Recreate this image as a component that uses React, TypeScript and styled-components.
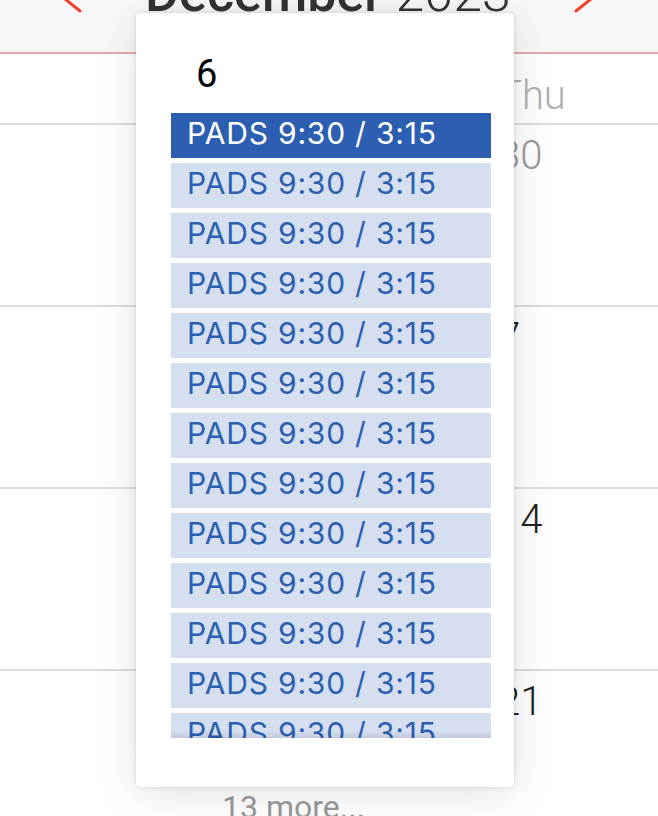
import React from 'react';
import styled, { createGlobalStyle } from 'styled-components';

type Day = { label: string; muted?: boolean; more?: number };

// only Wed and Thu are in view; the previous column sits off the left edge
const weekdays = ['Wed', 'Thu'];

const weeks: Day[][] = [
  [{ label: '29', muted: true }, { label: '30', muted: true }],
  [{ label: '6' }, { label: '7' }],
  [{ label: '13' }, { label: '14' }],
  [{ label: '20', more: 13 }, { label: '21' }],
];

const events = Array.from({ length: 16 }, (_, i) => ({
  id: i,
  title: 'PADS 9:30 / 3:15',
}));

const GlobalStyle = createGlobalStyle`
  html, body {
    margin: 0;
    padding: 0;
    overflow: hidden;
    background: #fff;
  }
  body {
    font-family: Roboto, 'Liberation Sans', sans-serif;
  }
`;

const Chevron: React.FC<{ dir: 'left' | 'right' }> = ({ dir }) => (
  <ChevronSvg viewBox="0 0 28 36" width={28} height={36}>
    <path
      d={dir === 'left' ? 'M24 2 L4 18 L24 34' : 'M4 2 L24 18 L4 34'}
      fill="none"
      stroke="#f2412f"
      strokeWidth={3}
      strokeLinecap="round"
      strokeLinejoin="round"
    />
  </ChevronSvg>
);

export default function App() {
  return (
    <>
      <GlobalStyle />
      <Page>
        <Header>
          <Chevron dir="left" />
          <Title>
            <strong>December</strong> <span>2023</span>
          </Title>
          <Chevron dir="right" />
        </Header>

        <WeekdayRow>
          <EdgeCell />
          {weekdays.map((w) => (
            <WeekdayCell key={w}>{w}</WeekdayCell>
          ))}
        </WeekdayRow>

        {weeks.map((week, wi) => (
          <WeekRow key={wi}>
            <EdgeCell />
            {week.map((day) => (
              <DayCell key={day.label}>
                <DayNumber $muted={day.muted}>{day.label}</DayNumber>
                {day.more ? <MoreLink>{day.more} more...</MoreLink> : null}
              </DayCell>
            ))}
          </WeekRow>
        ))}

        <Popover>
          <PopoverDate>6</PopoverDate>
          <EventList>
            {events.map((ev) => (
              <EventItem key={ev.id} $active={ev.id === 0}>
                {ev.title}
              </EventItem>
            ))}
          </EventList>
        </Popover>
      </Page>
    </>
  );
}

/* page is scrolled down a bit, header partly out of view */
const Page = styled.div`
  position: relative;
  margin-top: -60px;
`;

const Header = styled.header`
  box-sizing: border-box;
  height: 114px;
  display: grid;
  grid-template-columns: auto 1fr auto;
  align-items: end;
  padding: 0 58px 28px 56px;
  background: #f8f8f8;
  border-bottom: 2px solid #e6aaa6;
`;

const ChevronSvg = styled.svg`
  display: block;
  margin-bottom: 11px;
`;

const Title = styled.h1`
  margin: 0;
  text-align: center;
  font-size: 52px;
  line-height: 60px;
  color: #333;
  font-weight: 400;

  strong {
    font-weight: 500;
  }
  span {
    font-weight: 300;
  }
`;

const Grid = styled.div`
  display: grid;
  grid-template-columns: 214px repeat(2, 276px);
  box-sizing: border-box;
  border-bottom: 2px solid #dcdcdc;
`;

const EdgeCell = styled.div``;

const WeekdayRow = styled(Grid)`
  height: 71px;
`;

const WeekdayCell = styled.div`
  padding: 18px 8px 0;
  font-size: 40px;
  line-height: 48px;
  font-weight: 300;
  color: #b0b0b0;
`;

const WeekRow = styled(Grid)`
  height: 182px;
`;

const DayCell = styled.div`
  padding: 7px 8px;
  display: flex;
  flex-direction: column;
`;

const DayNumber = styled.div<{ $muted?: boolean }>`
  font-size: 40px;
  line-height: 48px;
  font-weight: 300;
  color: ${(p) => (p.$muted ? '#999' : '#222')};
`;

const MoreLink = styled.div`
  margin-top: 61px;
  font-size: 32px;
  line-height: 40px;
  color: #999;
`;

const Popover = styled.div`
  position: absolute;
  top: 73px;
  left: 136px;
  width: 378px;
  height: 774px;
  box-sizing: border-box;
  padding: 38px 23px 49px 35px;
  display: flex;
  flex-direction: column;
  background: #fff;
  border-radius: 5px;
  box-shadow: 0 0 5px rgba(0, 0, 0, 0.12), 0 6px 44px rgba(0, 0, 0, 0.12);
`;

const PopoverDate = styled.div`
  padding-left: 25px;
  margin-bottom: 16px;
  font-size: 38px;
  line-height: 46px;
  color: #000;
`;

const EventList = styled.div`
  position: relative;
  flex: 1;
  overflow: hidden;
  display: flex;
  flex-direction: column;
  gap: 5px;

  &::after {
    content: '';
    position: absolute;
    left: 0;
    right: 0;
    bottom: 0;
    height: 8px;
    background: linear-gradient(rgba(0, 0, 0, 0), rgba(0, 0, 0, 0.09));
  }
`;

const EventItem = styled.div<{ $active?: boolean }>`
  flex-shrink: 0;
  box-sizing: border-box;
  height: 45px;
  padding: 0 0 4px 16px;
  line-height: 41px;
  font-family: Inter, 'Liberation Sans', sans-serif;
  font-size: 30px;
  letter-spacing: 0.8px;
  white-space: nowrap;
  background: ${(p) => (p.$active ? '#2c5fb1' : '#d5dff0')};
  color: ${(p) => (p.$active ? '#fff' : '#2c5fb1')};
`;
